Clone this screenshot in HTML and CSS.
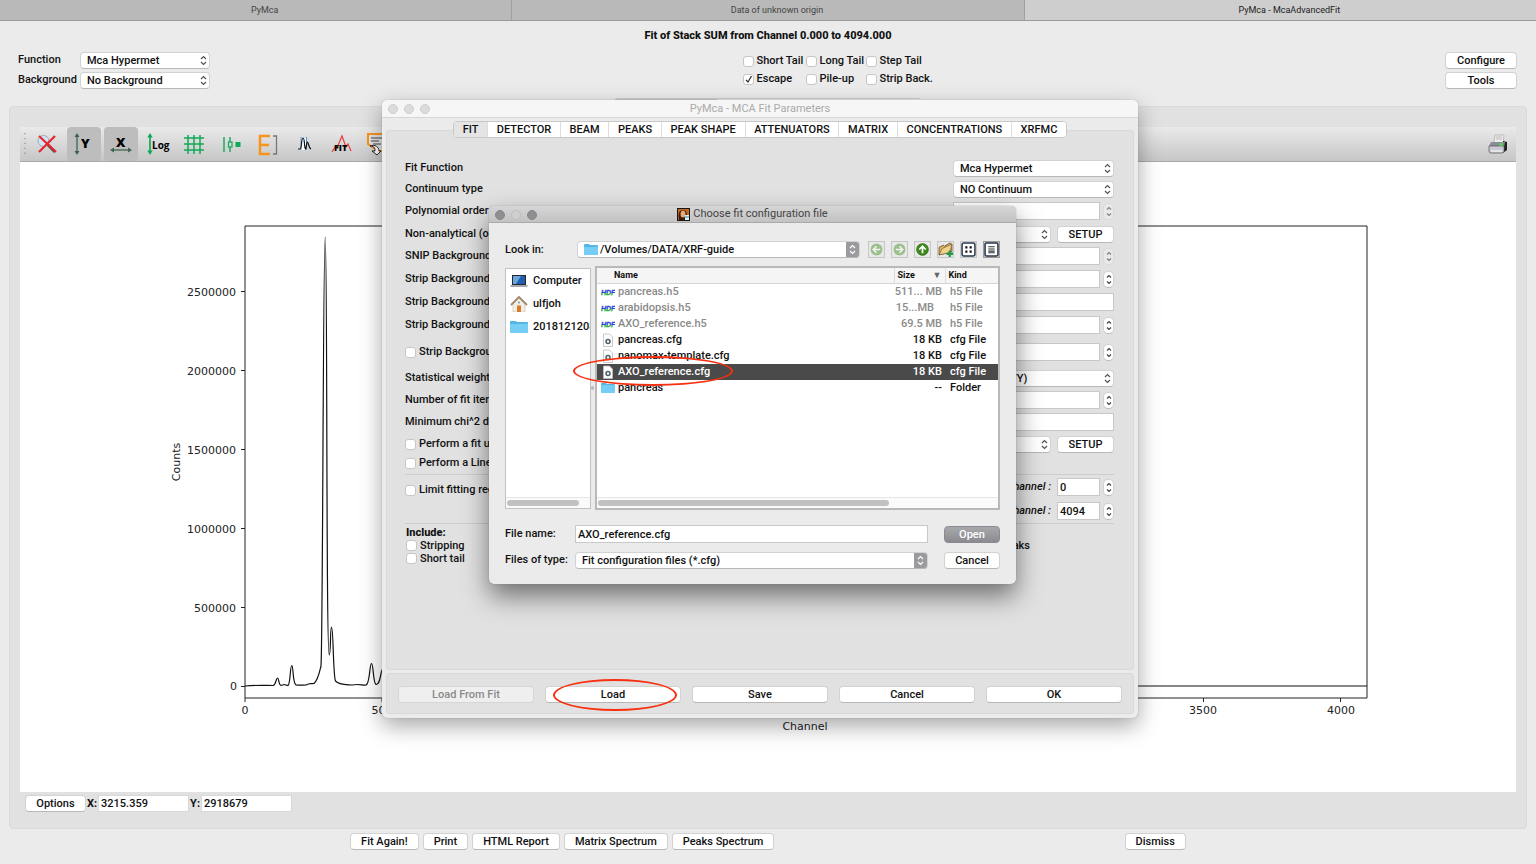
FILE: index.html
```
<!DOCTYPE html>
<html lang="en">
<head>
    <meta charset="UTF-8">
    <meta name="viewport" content="width=device-width, initial-scale=1.0">
    <title>PyMca - McaAdvancedFit</title>
    <link rel="stylesheet" href="styles.css">
</head>
<body>
    <nav class="window-tabs">
        <a href="#">PyMca</a>
        <a href="#">Data of unknown origin</a>
        <a href="#" class="current">PyMca - McaAdvancedFit</a>
    </nav>

    <h1 class="fit-title">Fit of Stack SUM from Channel 0.000 to 4094.000</h1>

    <header class="options-bar">
        <div class="model">
            <label for="function">Function</label>
            <select id="function"><option>Mca Hypermet</option></select>
            <label for="background">Background</label>
            <select id="background"><option>No Background</option></select>
        </div>
        <div class="flags">
            <label><input type="checkbox">Short Tail</label>
            <label><input type="checkbox">Long Tail</label>
            <label><input type="checkbox">Step Tail</label>
            <label><input type="checkbox" checked>Escape</label>
            <label><input type="checkbox">Pile-up</label>
            <label><input type="checkbox">Strip Back.</label>
        </div>
        <div class="side-buttons">
            <button>Configure</button>
            <button>Tools</button>
        </div>
    </header>

    <div class="graph-tabs"><span class="on"></span><span></span><span></span></div>
    <main class="graph-panel">
        <div class="toolbar">
            <svg class="grip" viewBox="0 0 4 24"><path d="M2 1v22" stroke="#999" stroke-width="1.3" stroke-dasharray="1.3 3.6"/></svg>
            <button class="tool" aria-label="Reset zoom">
                <svg viewBox="0 0 24 24"><circle cx="8.500" cy="9" r="5.500" fill="#cfe6f2" stroke="#9ab" stroke-width="1"/><path d="M13 13l7 7" stroke="#555" stroke-width="3"/><path d="M4 4l17 16M20 4L4 20" stroke="#e8252d" stroke-width="2.200"/></svg>
            </button>
            <button class="tool on" aria-label="Y autoscale">
                <svg viewBox="0 0 24 24"><path d="M5 3v18" stroke="#3f6350" stroke-width="1.300"/><path d="M5 1l2.500 4h-5zM5 23l2.500-4h-5z" fill="#3f6350"/><text x="9" y="16" class="glyph">Y</text></svg>
            </button>
            <button class="tool on" aria-label="X autoscale">
                <svg viewBox="0 0 24 24"><path d="M3 18h18" stroke="#3f6350" stroke-width="1.300"/><path d="M1 18l4-2.500v5zM23 18l-4-2.500v5z" fill="#3f6350"/><text x="7" y="15" class="glyph">X</text></svg>
            </button>
            <button class="tool" aria-label="Logarithmic axis">
                <svg viewBox="0 0 24 24"><path d="M4 3v18" stroke="#10a957" stroke-width="1.700"/><path d="M4 1l2.700 4.500H1.300zM4 23l2.700-4.500H1.300z" fill="#10a957"/><text x="6" y="17" class="glyph log">Log</text></svg>
            </button>
            <button class="tool" aria-label="Grid">
                <svg viewBox="0 0 24 24"><path d="M5 3v19M11 3v19M17 3v19M1 6h20M1 12h20M1 18h20" stroke="#10a957" stroke-width="1.500"/></svg>
            </button>
            <button class="tool" aria-label="Toggle markers">
                <svg viewBox="0 0 24 24"><path d="M4 5v15M10 5v5M10 15v5" stroke="#10a957" stroke-width="1.400"/><rect x="8.500" y="10" width="3.500" height="5" fill="none" stroke="#10a957" stroke-width="1.200"/><rect x="15.500" y="10" width="5" height="5" fill="#10a957"/></svg>
            </button>
            <button class="tool" aria-label="Energy axis">
                <svg viewBox="0 0 24 24"><path d="M13 4H3v18h10M3 13h9" fill="none" stroke="#f7941d" stroke-width="2.500"/><path d="M16 4h3.500v18H16" fill="none" stroke="#777" stroke-width="1.300"/></svg>
            </button>
            <button class="tool" aria-label="Peak search">
                <svg viewBox="0 0 24 24"><path d="M6 6h7v12H6z" fill="#fff"/><path d="M7 5v13M12.500 5v13" stroke="#4b90d8"/><path d="M4 17h2c2 0 1-11 3-11s1 10 2.500 11c1-1 1-7 2-7s1 6 3.500 7" fill="none" stroke="#111" stroke-width="1.200"/></svg>
            </button>
            <button class="tool" aria-label="Fit">
                <svg viewBox="0 0 24 24"><path d="M1 20l3-5 2 1 5-12 4 11 2-3 3 7" fill="none" stroke="#ee3a3a" stroke-width="1.200"/><text x="3" y="19" class="glyph fit">FIT</text></svg>
            </button>
            <button class="tool" aria-label="Save">
                <svg viewBox="0 0 24 24"><path d="M0 2h20v17H10L0 12z" fill="#e4e4e4" stroke="#f7941d" stroke-width="2"/><path d="M3 6h12M3 9h8M5 12h8" stroke="#444"/><path d="M2 14c5 0 5 3 5 5H4l5 4 4-4h-2c0-4-4-7-9-5z" fill="#fff" stroke="#222"/></svg>
            </button>
            <button class="tool print" aria-label="Print">
                <svg viewBox="0 0 24 24"><path d="M8 11L9 3h9l-1 8z" fill="#eee" stroke="#bbb"/><path d="M10 5h6M10 7h6" stroke="#bbb"/><path d="M17 9l4 1v8l-4 3z" fill="#222"/><path d="M5 10h14l-1 5v5H3v-6z" fill="#8b8b95"/><path d="M3 14h15v5q0 2-2 2H5q-2 0-2-2z" fill="#c9c9d3" stroke="#555" stroke-width=".7"/><path d="M5 19h11" stroke="#fff"/><circle cx="15" cy="12.500" r="1.700" fill="#4be04b"/></svg>
            </button>
        </div>
        <svg class="plot" viewBox="20 162 1496 630" preserveAspectRatio="none">
            <path class="axis" d="M245 226H1367V698H245z"/>
            <path class="axis" d="M241 291.500h4M241 370.500h4M241 449.500h4M241 528.500h4M241 607.500h4M241 686.500h4M245 698v4M382 698v4M1203.500 698v4M1340.500 698v4"/>
            <path class="curve" d="M245 686C256 685 266 685.500 273 685.500C276 685 276 678 277.500 678C279 678 278.500 685 281 685.500L284 684.500L288 685.500C290.500 684 290 665.500 291.800 665.500C293.500 665.500 292.500 683 296 685C301 685.500 303 685 306 685C310 682.500 311 684 314 683.500C318 680 319 674 321 666C323 630 323 237 325.200 237C327.500 237 326 655 329.200 655C331 655 330 627 331.500 627C333.500 627 333 676 335.500 681C339 685 345 684.500 352 685C360 683.500 362 685.500 366 685C370 684 369.500 663.500 371.500 663.500C373.500 663.500 373 683 376 684.500C380 685 380 676 382 670C386 664 386 684 390 686H1367"/>
            <g class="ticks" text-anchor="end">
                <text x="236" y="296">2500000</text>
                <text x="236" y="375">2000000</text>
                <text x="236" y="454">1500000</text>
                <text x="236" y="533">1000000</text>
                <text x="236" y="612">500000</text>
                <text x="237" y="690">0</text>
            </g>
            <g class="ticks" text-anchor="middle">
                <text x="245" y="714">0</text>
                <text x="382" y="714">500</text>
                <text x="1203" y="714">3500</text>
                <text x="1341" y="714">4000</text>
                <text x="805" y="730">Channel</text>
                <text transform="translate(180 462) rotate(-90)">Counts</text>
            </g>
        </svg>
        <div class="coords">
            <button>Options</button>
            <label for="x">X:</label><input type="text" id="x" value="3215.359">
            <label for="y">Y:</label><input type="text" id="y" value="2918679">
        </div>
    </main>

    <footer class="actions">
        <div class="reports">
            <button>Fit Again!</button>
            <button>Print</button>
            <button>HTML Report</button>
            <button>Matrix Spectrum</button>
            <button>Peaks Spectrum</button>
        </div>
        <button>Dismiss</button>
    </footer>

    <!-- MCA fit parameters -->
    <section class="window params">
        <div class="titlebar"><div class="lights"><i></i><i></i><i></i></div>PyMca - MCA Fit Parameters</div>
        <div class="segments">
            <button class="on">FIT</button>
            <button>DETECTOR</button>
            <button>BEAM</button>
            <button>PEAKS</button>
            <button>PEAK SHAPE</button>
            <button>ATTENUATORS</button>
            <button>MATRIX</button>
            <button>CONCENTRATIONS</button>
            <button>XRFMC</button>
        </div>
        <div class="pane">
            <div class="row"><label for="fitfun">Fit Function</label><div class="field"><select id="fitfun"><option>Mca Hypermet</option></select></div></div>
            <div class="row short"><label for="cont">Continuum type</label><div class="field"><select id="cont"><option>NO Continuum</option></select></div></div>
            <div class="row tall"><label for="poly">Polynomial order</label><div class="field"><input type="text" id="poly" disabled><button class="spin" aria-label="Step" disabled></button></div></div>
            <div class="row"><label for="alg">Non-analytical (or</label><div class="field wide-gap"><select id="alg"><option>Strip</option></select><button class="setup">SETUP</button></div></div>
            <div class="row"><label for="snip">SNIP Background</label><div class="field"><input type="text" id="snip" disabled><button class="spin" aria-label="Step" disabled></button></div></div>
            <div class="row tall"><label for="s1">Strip Background</label><div class="field"><input type="text" id="s1"><button class="spin" aria-label="Step"></button></div></div>
            <div class="row"><label for="s2">Strip Background</label><div class="field"><input type="text" id="s2"></div></div>
            <div class="row tall"><label for="s3">Strip Background</label><div class="field"><input type="text" id="s3"><button class="spin" aria-label="Step"></button></div></div>
            <div class="row check"><label><input type="checkbox">Strip Background</label><div class="field"><input type="text" aria-label="Anchors"><button class="spin" aria-label="Step"></button></div></div>
            <div class="row"><label for="stat">Statistical weight</label><div class="field"><select id="stat"><option>Poisson (1/Y)</option></select></div></div>
            <div class="row"><label for="iter">Number of fit iter</label><div class="field"><input type="text" id="iter"><button class="spin" aria-label="Step"></button></div></div>
            <div class="row"><label for="chi">Minimum chi^2 di</label><div class="field"><input type="text" id="chi"></div></div>
            <div class="row"><label><input type="checkbox">Perform a fit us</label><div class="field wide-gap"><select aria-label="Layer"><option>Inner layer</option></select><button class="setup">SETUP</button></div></div>
            <div class="row low"><label><input type="checkbox">Perform a Linea</label></div>
            <div class="limits">
                <label class="limit-check"><input type="checkbox">Limit fitting reg</label>
                <div class="channels">
                    <div class="channel"><label for="first">First channel :</label><input type="text" id="first" value="0"><button class="spin" aria-label="Step"></button></div>
                    <div class="channel"><label for="last">Last channel :</label><input type="text" id="last" value="4094"><button class="spin" aria-label="Step"></button></div>
                </div>
            </div>
            <div class="include">
                <b>Include:</b>
                <label><input type="checkbox">Stripping</label>
                <label><input type="checkbox">Peaks</label>
                <label><input type="checkbox">Short tail</label>
            </div>
        </div>
        <div class="param-actions">
            <button disabled>Load From Fit</button>
            <button>Load</button>
            <button>Save</button>
            <button>Cancel</button>
            <button>OK</button>
        </div>
    </section>

    <!-- File chooser -->
    <section class="window chooser">
        <div class="titlebar">
            <div class="lights"><i></i><i class="off"></i><i></i></div>
            <svg class="app-icon" viewBox="0 0 13 13"><path d="M0 0h13v13H0z" fill="#1d1512"/><path d="M1 1h11v11H1z" fill="#c06a25"/><path d="M2 12c-1-6 0-10 4-10s4 4 4 7l-2 3z" fill="#3a1c10"/><ellipse cx="6" cy="6" rx="2.500" ry="3.500" fill="#e8a977"/><path d="M8 7h4v5H8z" fill="#dff1f8"/><path d="M8 9h4" stroke="#2a8fc0"/></svg>
            Choose fit configuration file
        </div>
        <div class="look-in">
            <label for="dir">Look in:</label>
            <div class="dir-box">
                <svg class="folder" viewBox="0 0 14 12"><path d="M0 2q0-1 1-1h4l1 1h7q1 0 1 1v8q0 1-1 1H1q-1 0-1-1z" fill="#57b5e4"/><path d="M0 4h14v7q0 1-1 1H1q-1 0-1-1z" fill="#76cdf5"/></svg>
                <select id="dir" class="grey-arrow"><option>/Volumes/DATA/XRF-guide</option></select>
            </div>
            <div class="nav">
                <button aria-label="Back" disabled><svg viewBox="0 0 14 14"><circle cx="7" cy="7" r="5.500" fill="#4d9a2b"/><path d="M10.500 7H4M7 4L4 7l3 3" fill="none" stroke="#fff" stroke-width="1.500"/></svg></button>
                <button aria-label="Forward" disabled><svg viewBox="0 0 14 14"><circle cx="7" cy="7" r="5.500" fill="#4d9a2b"/><path d="M3.500 7H10M7 4l3 3-3 3" fill="none" stroke="#fff" stroke-width="1.500"/></svg></button>
                <button aria-label="Parent directory"><svg viewBox="0 0 14 14"><circle cx="7" cy="7" r="5.500" fill="#3c8a1c" stroke="#2b6a12" stroke-width=".6"/><path d="M7 10.500V4M4 7l3-3 3 3" fill="none" stroke="#fff" stroke-width="1.600"/></svg></button>
                <button aria-label="New folder"><svg viewBox="0 0 14 14"><path d="M1 12V5l4-2 1 1 5-3 2 1v7z" fill="#e0b566" stroke="#6d5125" stroke-width=".8"/><path d="M1 12l3-6 9-4-2 8z" fill="#f2d28d" stroke="#6d5125" stroke-width=".6"/><path d="M11 8v6M8 11h6" stroke="#23984a" stroke-width="2.200"/></svg></button>
                <button aria-label="List view"><svg viewBox="0 0 14 14"><rect x="1" y="1" width="12" height="12" rx="1.500" fill="#fff" stroke="#26394d" stroke-width="1.400"/><path d="M4 4h2v2H4zM8 4h2v2H8zM4 8h2v2H4zM8 8h2v2H8z" fill="#111"/></svg></button>
                <button aria-label="Detail view" class="on"><svg viewBox="0 0 14 14"><rect x="1" y="1" width="12" height="12" rx="1.500" fill="#fff" stroke="#26394d" stroke-width="1.400"/><path d="M4 4.500h6M4 6.500h6M4 8.500h6M4 10h6" stroke="#333"/></svg></button>
            </div>
        </div>
        <div class="browser">
            <div class="places">
                <ul>
                    <li><svg viewBox="0 0 18 16"><path d="M2 2h14v10H2z" fill="#25282e"/><path d="M3 3h12v8H3z" fill="#1f5fae"/><path d="M3 3h8l-5 8H3z" fill="#6aa5dd"/><path d="M0 12h18l-1 2H1z" fill="#a5a8ad"/></svg>Computer</li>
                    <li><svg viewBox="0 0 18 16"><path d="M3 8l6-6 6 6v8H3z" fill="#f3efe6" stroke="#c2b9a9" stroke-width=".6"/><path d="M1 9l8-8 8 8" fill="none" stroke="#a1876d" stroke-width="1.800"/><path d="M7 9.500h4V16H7z" fill="#dc7a2a"/><circle cx="9" cy="6.500" r="1" fill="#6d9bc4"/></svg>ulfjoh</li>
                    <li><svg viewBox="0 0 18 16"><path d="M0 3q0-1 1-1h5l1 1h10q1 0 1 1v9q0 1-1 1H1q-1 0-1-1z" fill="#57b5e4"/><path d="M0 5h18v8q0 1-1 1H1q-1 0-1-1z" fill="#76cdf5"/></svg>2018121208</li>
                </ul>
                <div class="scroll"><span class="thumb"></span></div>
            </div>
            <span class="splitter"></span>
            <div class="files">
                <table>
                    <thead>
                        <tr><th>Name</th><th class="size">Size <span>▼</span></th><th>Kind</th></tr>
                    </thead>
                    <tbody id="fileRows"></tbody>
                </table>
                <div class="scroll"><span class="thumb"></span></div>
            </div>
        </div>
        <div class="form">
            <label for="fname">File name:</label>
            <input type="text" id="fname" value="AXO_reference.cfg">
            <button class="primary">Open</button>
            <label for="ftype">Files of type:</label>
            <select id="ftype" class="grey-arrow"><option>Fit configuration files (*.cfg)</option></select>
            <button>Cancel</button>
        </div>
    </section>

    <!-- Highlights -->
    <div class="ring ring-file"></div>
    <div class="ring ring-load"></div>

    <script>
        const icons = {
            h5: '<svg viewBox="0 0 14 14"><defs><linearGradient id="hdf" x2="0" y2="1"><stop offset=".5" stop-color="#2440e0"/><stop offset=".6" stop-color="#22a83a"/></linearGradient></defs><text x="0" y="10" class="hdf">HDF</text></svg>',
            cfg: '<svg viewBox="0 0 14 14"><path d="M2.500 1h6l3 3v9.500h-9z" fill="#fff" stroke="#bbb" stroke-width=".8"/><circle cx="7" cy="8.500" r="2" fill="none" stroke="#4c5f68" stroke-width="1.500"/></svg>',
            folder: '<svg viewBox="0 0 14 14"><path d="M0 3q0-1 1-1h4l1 1h7q1 0 1 1v7q0 1-1 1H1q-1 0-1-1z" fill="#57b5e4"/><path d="M0 4h14v7q0 1-1 1H1q-1 0-1-1z" fill="#76cdf5"/></svg>'
        };

        const files = [
            { name: "pancreas.h5", size: "511... MB", kind: "h5 File", icon: "h5", state: "dim" },
            { name: "arabidopsis.h5", size: "15...MB", kind: "h5 File", icon: "h5", state: "dim cut" },
            { name: "AXO_reference.h5", size: "69.5 MB", kind: "h5 File", icon: "h5", state: "dim" },
            { name: "pancreas.cfg", size: "18 KB", kind: "cfg File", icon: "cfg", state: "" },
            { name: "nanomax-template.cfg", size: "18 KB", kind: "cfg File", icon: "cfg", state: "" },
            { name: "AXO_reference.cfg", size: "18 KB", kind: "cfg File", icon: "cfg", state: "selected" },
            { name: "pancreas", size: "--", kind: "Folder", icon: "folder", state: "" }
        ];

        function renderFiles() {
            const body = document.getElementById("fileRows");
            files.forEach(file => {
                let tr = document.createElement("tr");
                tr.className = file.state;
                tr.innerHTML = `
                    <td class="name">${icons[file.icon]}${file.name}</td>
                    <td class="size">${file.size}</td>
                    <td>${file.kind}</td>
                `;
                body.appendChild(tr);
            });
        }

        renderFiles();
    </script>
</body>
</html>
```
FILE: styles.css
```
* {
    box-sizing: border-box;
}
body {
    font-family: Roboto, "Liberation Sans", sans-serif;
    font-size: 11px;
    font-weight: 500;
    line-height: 14px;
    color: #111;
    background: #ebebeb;
    display: flex;
    flex-direction: column;
    height: 100vh;
    margin: 0;
    overflow: hidden;
}
button, select, input {
    font: inherit;
    color: inherit;
    margin: 0;
}
button {
    height: 17px;
    padding: 0 10px;
    line-height: 15px;
    background: white;
    border: 1px solid #d2d2d2;
    border-bottom-color: #b8b8b8;
    border-radius: 4px;
    white-space: nowrap;
}
button:disabled {
    color: #8a8a8a;
    background-color: #efefef;
    border-color: #d6d6d6;
}
select {
    appearance: none;
    height: 17px;
    padding: 0 18px 0 6px;
    line-height: 15px;
    border: 1px solid #d2d2d2;
    border-bottom-color: #b8b8b8;
    border-radius: 4px;
    background: white url("data:image/svg+xml,%3Csvg xmlns='http://www.w3.org/2000/svg' width='7' height='11' fill='none' stroke='%23555' stroke-width='1.2'%3E%3Cpath d='M1 4l2.500-2.500L6 4M1 7l2.500 2.500L6 7'/%3E%3C/svg%3E") no-repeat right 2px center;
}
select.grey-arrow {
    background: white url("data:image/svg+xml,%3Csvg xmlns='http://www.w3.org/2000/svg' width='13' height='17'%3E%3Cpath d='M0 0h13v17H0z' fill='%239a9a9f'/%3E%3Cpath d='M4 7l2.500-2.500L9 7M4 10l2.500 2.500L9 10' fill='none' stroke='white' stroke-width='1.2'/%3E%3C/svg%3E") no-repeat right center;
}
input[type="text"] {
    height: 18px;
    padding: 0 2px;
    border: 1px solid #c8c8c8;
    background: white;
    min-width: 0;
}
input[type="checkbox"] {
    appearance: none;
    flex: none;
    width: 11px;
    height: 11px;
    background: white;
    border: 1px solid #c6c6c6;
    border-radius: 3px;
}
input[type="checkbox"]:checked {
    background: white url("data:image/svg+xml,%3Csvg xmlns='http://www.w3.org/2000/svg' width='9' height='9'%3E%3Cpath d='M2 5l2 2 3.500-6' fill='none' stroke='%23333' stroke-width='1.3'/%3E%3C/svg%3E") no-repeat center;
}
label {
    display: flex;
    align-items: center;
    gap: 3px;
    white-space: nowrap;
}
.window-tabs {
    display: flex;
    height: 21px;
    background: #b9b9b9;
    border-bottom: 1px solid #999;
}
.window-tabs a {
    flex: 1;
    padding-left: 18px;
    font-size: 9px;
    font-weight: 400;
    line-height: 21px;
    text-align: center;
    text-decoration: none;
    color: #444;
    border-right: 1px solid #a0a0a0;
}
.window-tabs .current {
    background: #cecece;
    border-right: none;
    color: #222;
}
.fit-title {
    margin: 0;
    font-size: 11px;
    font-weight: 800;
    line-height: 29px;
    text-align: center;
}
.options-bar {
    display: flex;
    justify-content: space-between;
    align-items: center;
    padding: 0 19px 0 18px;
}
.model {
    display: grid;
    grid-template-columns: 62px 130px;
    grid-auto-rows: 20px;
    align-items: center;
}
.flags {
    display: grid;
    grid-template-columns: 63px 60px 67px;
    grid-auto-rows: 18px;
    padding-left: 20px;
}
.side-buttons {
    display: grid;
    grid-template-columns: 72px;
    grid-auto-rows: 20px;
    align-items: center;
}
.side-buttons button {
    padding: 0;
}
.graph-tabs {
    display: flex;
    align-self: center;
    width: 308px;
    height: 8px;
    margin-top: 8px;
    border: 1px solid #ccc;
    border-bottom: none;
    border-radius: 4px 4px 0 0;
}
.graph-tabs span {
    flex: 1;
    background: #eee;
}
.graph-tabs .on {
    background: #ccc;
}
.graph-panel {
    flex: 1;
    min-height: 0;
    display: flex;
    flex-direction: column;
    margin: 0 9px;
    padding: 20px 10px 16px;
    background: #e1e1e1;
    border: 1px solid #dadada;
    border-radius: 4px;
}
.toolbar {
    display: flex;
    align-items: center;
    gap: 3px;
    height: 35px;
    padding: 0 1px 0 3px;
    background: linear-gradient(#eaeaea, #c6c6c6);
    border-bottom: 1px solid #aaa;
}
.grip {
    width: 4px;
    height: 24px;
}
.tool {
    width: 34px;
    height: 34px;
    padding: 5px;
    background: none;
    border: none;
}
.tool.on {
    background: #bdbdbd;
}
.tool svg {
    display: block;
    width: 24px;
    height: 24px;
    overflow: visible;
}
.print {
    margin-left: auto;
}
.glyph {
    font-family: "Open Sans", sans-serif;
    font-size: 13px;
    font-weight: 800;
}
.glyph.log {
    font-size: 10px;
    font-weight: 700;
}
.glyph.fit {
    font-size: 9px;
}
.plot {
    flex: 1;
    min-height: 0;
    width: 100%;
    background: white;
}
.axis {
    fill: none;
    stroke: #222;
    stroke-width: 1;
}
.curve {
    fill: none;
    stroke: #111;
    stroke-width: 1.2;
}
.ticks {
    font-family: "DejaVu Sans", sans-serif;
    font-size: 11px;
    font-weight: 400;
    fill: #222;
}
.coords {
    display: flex;
    align-items: center;
    padding: 3px 5px 0;
}
.coords button {
    width: 61px;
    padding: 0;
}
.coords label {
    padding: 0 1px;
    font-weight: 700;
}
.coords input[type="text"] {
    width: 91px;
    height: 17px;
    border-color: #d8d8d8;
}
.actions {
    display: flex;
    justify-content: space-evenly;
    padding: 4px 0 14px;
}
.reports {
    display: flex;
    gap: 4px;
}

/* floating windows */
.window {
    position: absolute;
    background: #ebebeb;
    border-radius: 5px;
}
.params {
    left: 382px;
    top: 100px;
    width: 756px;
    padding-bottom: 4px;
    box-shadow: 0 0 1px #777, 0 8px 22px rgba(0, 0, 0, 0.35);
}
.titlebar {
    position: relative;
    display: flex;
    justify-content: center;
    align-items: center;
    gap: 3px;
    height: 18px;
    font-weight: 400;
    line-height: 16px;
    color: #aaa;
    background: #f6f6f6;
    border-bottom: 1px solid #d6d6d6;
    border-radius: 5px 5px 0 0;
}
.lights {
    position: absolute;
    left: 6px;
    top: 4px;
    display: flex;
    gap: 6px;
}
.lights i {
    width: 10px;
    height: 10px;
    border-radius: 50%;
    background: #dcdcdc;
    border: 1px solid #cfcfcf;
}
.segments {
    position: relative;
    z-index: 1;
    display: flex;
    width: 614px;
    margin: 3px auto 0;
    border: 1px solid #c8c8c8;
    border-radius: 4px;
    background: white;
    overflow: hidden;
}
.segments button {
    flex: auto;
    height: 15px;
    padding: 0;
    line-height: 14px;
    border: none;
    border-right: 1px solid #ddd;
    border-radius: 0;
}
.segments button.on {
    background: #e4e4e4;
}
.segments button:last-child {
    border-right: none;
}
.pane {
    margin: -8px 4px 0;
    padding: 26px 19px 104px 18px;
    background: #e1e1e1;
    border: 1px solid #d9d9d9;
    border-radius: 3px;
}
.row {
    display: flex;
    justify-content: space-between;
    align-items: center;
    height: 22px;
}
.row.short {
    height: 20px;
}
.row.tall {
    height: 24px;
}
.row.check {
    height: 30px;
}
.row.low {
    height: 16px;
}
.field {
    display: flex;
    align-items: center;
    gap: 3px;
    width: 161px;
}
.field.wide-gap {
    gap: 6px;
}
.field select, .field input {
    flex: 1;
    min-width: 0;
}
.field .setup {
    width: 57px;
    padding: 0;
}
.spin {
    flex: none;
    width: 11px;
    height: 17px;
    padding: 0;
    border-radius: 5px;
    background: white url("data:image/svg+xml,%3Csvg xmlns='http://www.w3.org/2000/svg' width='6' height='11' fill='none' stroke='%23444' stroke-width='1.2'%3E%3Cpath d='M1 3.500l2-2 2 2M1 7.500l2 2 2-2'/%3E%3C/svg%3E") no-repeat center;
}
.spin:disabled {
    opacity: 0.6;
}
.limits {
    display: flex;
    justify-content: space-between;
    align-items: flex-start;
    margin-top: 3px;
    border-top: 1px solid #cdcdcd;
    border-bottom: 1px solid #cdcdcd;
}
.limit-check {
    height: 30px;
}
.channel {
    display: flex;
    justify-content: flex-end;
    align-items: center;
    gap: 3px;
    height: 24px;
}
.channel label {
    padding-right: 3px;
    font-style: italic;
}
.channel input {
    width: 43px;
}
.include {
    display: grid;
    grid-template-columns: 1fr auto;
    padding: 2px 84px 0 1px;
    line-height: 13px;
}
.include b {
    grid-column: 1 / 3;
    font-weight: 800;
}
.param-actions {
    display: flex;
    gap: 11px;
    margin: 3px 4px 0;
    padding: 12px 11px 10px;
    background: #e1e1e1;
    border: 1px solid #d9d9d9;
    border-radius: 3px;
}
.param-actions button {
    flex: 1;
    padding: 0;
}

.chooser {
    left: 489px;
    top: 206px;
    width: 527px;
    padding-bottom: 15px;
    box-shadow: 0 0 1px #666, 0 12px 26px rgba(0, 0, 0, 0.5);
}
.chooser .titlebar {
    height: 17px;
    color: #444;
    background: linear-gradient(#d6d6d6, #c2c2c2);
    border-bottom-color: #aaa;
}
.chooser .lights i {
    background: #8e8e93;
    border-color: #85858a;
}
.chooser .lights .off {
    background: #cfcfcf;
    border-color: #bdbdbd;
}
.app-icon {
    width: 13px;
    height: 13px;
}
.look-in {
    display: grid;
    grid-template-columns: 72px 1fr auto;
    align-items: center;
    margin: 18px 16px 8px;
}
.dir-box {
    position: relative;
    display: flex;
}
.dir-box select {
    width: 100%;
    padding-left: 22px;
}
.folder {
    position: absolute;
    left: 7px;
    top: 2px;
    width: 14px;
    height: 12px;
}
.nav {
    display: flex;
    gap: 6px;
    margin-left: 8px;
}
.nav button {
    width: 17px;
    height: 17px;
    padding: 0;
    background: #e8e8e8;
    border: 1px solid #c6c6c6;
    border-radius: 0;
}
.nav button.on {
    background: #c4c4c4;
    border-color: #999;
}
.nav svg {
    display: block;
    width: 15px;
    height: 15px;
}
.nav button:disabled svg {
    opacity: 0.5;
}
.browser {
    display: flex;
    margin: 0 16px;
    height: 244px;
}
.places {
    display: flex;
    flex-direction: column;
    width: 86px;
    margin: 2px 0 1px;
    background: white;
    border: 1px solid #c2c2c2;
    overflow: hidden;
}
.places ul {
    flex: 1;
    list-style: none;
    margin: 0;
    padding: 0 0 0 4px;
}
.places li {
    display: flex;
    align-items: center;
    gap: 5px;
    height: 23px;
}
.places svg {
    flex: none;
    width: 18px;
    height: 16px;
}
.scroll {
    height: 11px;
    padding: 2px 1px;
    background: #fafafa;
    border-top: 1px solid #e6e6e6;
}
.thumb {
    display: block;
    width: 73%;
    height: 6px;
    border-radius: 3px;
    background: #c1c1c1;
}
.places .thumb {
    width: 88%;
}
.splitter {
    align-self: center;
    width: 3px;
    height: 4px;
    border-radius: 2px;
    background: #bbb;
}
.files {
    flex: 1;
    display: flex;
    flex-direction: column;
    margin-left: 1px;
    background: white;
    border: 2px solid #b9b9b9;
}
.files table {
    width: 100%;
    border-collapse: collapse;
    table-layout: fixed;
    margin-bottom: auto;
}
.files th {
    height: 15px;
    padding: 0 3px;
    font-size: 9px;
    font-weight: 700;
    line-height: 13px;
    text-align: left;
    background: #f5f5f5;
    border-bottom: 1px solid #d5d5d5;
    border-left: 1px solid #ddd;
}
.files th:first-child {
    padding-left: 17px;
    border-left: none;
}
.files th.size {
    width: 51px;
    white-space: nowrap;
}
.files th span {
    float: right;
    color: #666;
}
.files th:last-child {
    width: 53px;
}
.files td {
    height: 16px;
    padding: 0 5px;
    line-height: 16px;
    white-space: nowrap;
}
.files td.name {
    display: flex;
    align-items: center;
    gap: 3px;
    padding: 0 4px;
}
.files td.size {
    padding: 0 3px 0 0;
    text-align: right;
}
.files .cut .size {
    padding-right: 11px;
}
.files td svg {
    width: 14px;
    height: 14px;
}
.hdf {
    font-family: "Liberation Sans", sans-serif;
    font-size: 7px;
    font-weight: 700;
    font-style: italic;
    fill: url(#hdf);
    stroke: url(#hdf);
    stroke-width: 0.3;
}
.dim {
    color: #8a8a8a;
}
.selected {
    color: white;
    background: #4a4a4a;
}
.form {
    display: grid;
    grid-template-columns: 70px 1fr 56px;
    grid-auto-rows: 18px;
    row-gap: 8px;
    align-items: center;
    margin: 15px 16px 0;
}
.form input, .form select {
    margin-right: 16px;
}
.form button {
    padding: 0;
}
.form .primary {
    color: white;
    background: linear-gradient(#a8a8ac, #8a8a90);
    border-color: #8a8a90;
}

.ring {
    position: absolute;
    border: 2px solid #f8300f;
    border-radius: 50%;
    pointer-events: none;
}
.ring-file {
    left: 573px;
    top: 356px;
    width: 160px;
    height: 30px;
}
.ring-load {
    left: 553px;
    top: 679px;
    width: 124px;
    height: 32px;
}
```
